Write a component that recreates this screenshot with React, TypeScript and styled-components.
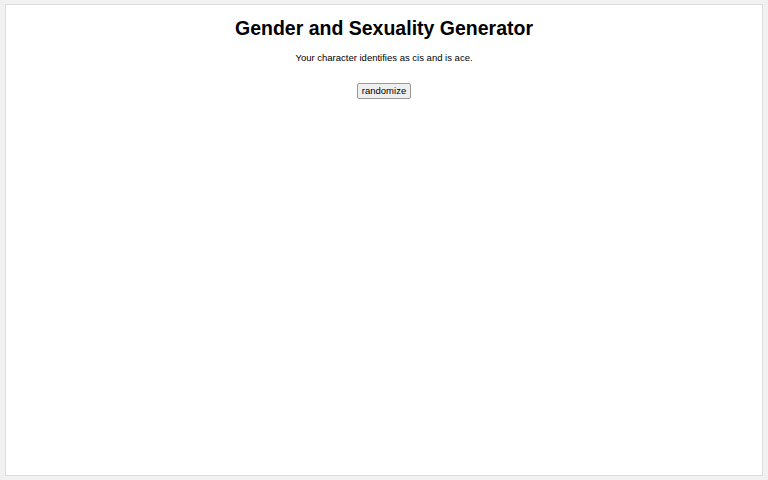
import React, { useState } from "react";
import styled, { createGlobalStyle } from "styled-components";

const GlobalStyle = createGlobalStyle`
  html, body {
    margin: 0;
    padding: 0;
    background: #f1f1f1;
    font-family: "Liberation Sans", Arial, sans-serif;
  }
`;

const Page = styled.div`
  padding: 4px 5px;
  height: 480px;
  box-sizing: border-box;
`;

const Panel = styled.main`
  height: 100%;
  box-sizing: border-box;
  background: #fff;
  border: 1px solid #dcdcdc;
  display: flex;
  flex-direction: column;
  align-items: center;
  padding-top: 12px;
`;

const Title = styled.h1`
  margin: 0;
  font-size: 19.5px;
  font-weight: bold;
  line-height: 22px;
  color: #000;
`;

const Result = styled.p`
  margin: 13px 0 0;
  font-size: 9.5px;
  line-height: 11px;
  color: #000;
`;

const RandomButton = styled.button`
  margin-top: 20px;
  font-family: "Liberation Sans", Arial, sans-serif;
  font-size: 9.5px;
  line-height: 12px;
  padding: 1px 4px;
  color: #000;
  background: #efefef;
  border: 1px solid #999;
  border-radius: 2px;
  cursor: pointer;
`;

const genders = ["cis", "trans", "nonbinary", "genderfluid", "agender"];
const sexualities = ["ace", "gay", "bi", "pan", "straight", "aro"];

const pick = (list: string[]) => list[Math.floor(Math.random() * list.length)];

export default function App() {
  const [gender, setGender] = useState("cis");
  const [sexuality, setSexuality] = useState("ace");

  return (
    <>
      <GlobalStyle />
      <Page>
        <Panel>
          <Title>Gender and Sexuality Generator</Title>
          <Result>
            Your character identifies as {gender} and is {sexuality}.
          </Result>
          <RandomButton
            onClick={() => {
              setGender(pick(genders));
              setSexuality(pick(sexualities));
            }}
          >
            randomize
          </RandomButton>
        </Panel>
      </Page>
    </>
  );
}
